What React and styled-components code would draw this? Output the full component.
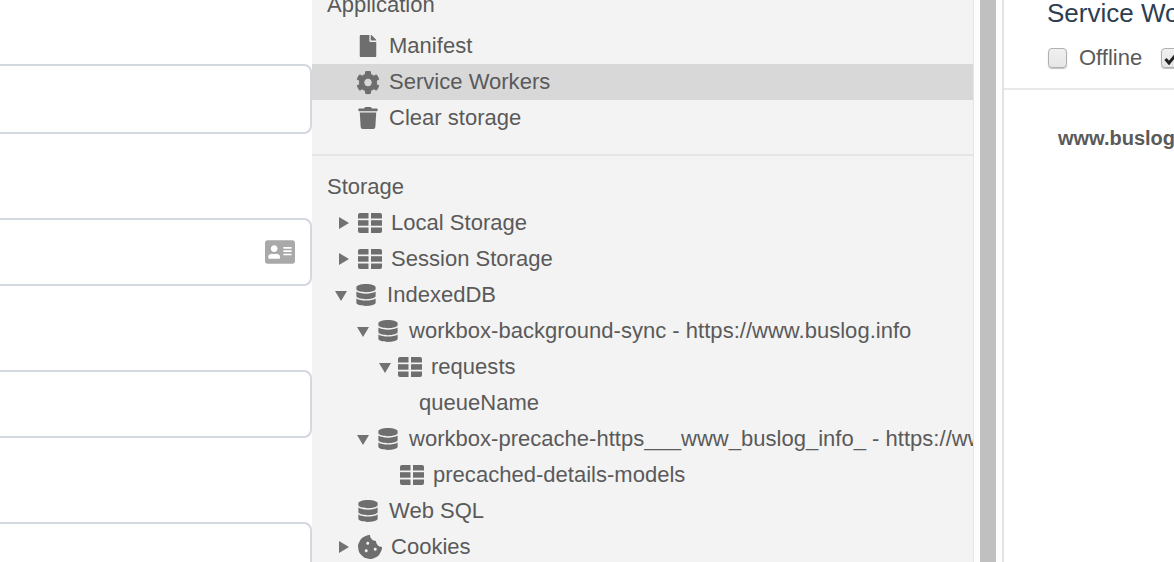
import React from "react";
import styled, { createGlobalStyle } from "styled-components";
import { FaCog, FaDatabase, FaCookieBite, FaAddressCard, FaFile, FaTrash } from "react-icons/fa";

const Global = createGlobalStyle`
  html, body { margin: 0; padding: 0; height: 100%; background: #fff; overflow: hidden; }
  #root { height: 100%; }
`;

const Page = styled.div`
  display: flex;
  width: 1174px;
  height: 562px;
  overflow: hidden;
  font-family: "Liberation Sans", Arial, sans-serif;
`;

const FormPane = styled.div`
  width: 312px;
  flex: none;
  padding-top: 64px;
  display: flex;
  flex-direction: column;
  gap: 84px;
  background: #fff;
  overflow: hidden;
`;

const Field = styled.div`
  box-sizing: border-box;
  height: ${p => p.$h}px;
  margin-left: -20px;
  border: 2px solid #d3d8de;
  border-radius: 8px;
  flex: none;
  display: flex;
  align-items: center;
  justify-content: flex-end;
  padding-right: 15px;
  color: #a9a9a9;
  font-size: 30px;
`;

const Sidebar = styled.div`
  box-sizing: border-box;
  width: 662px;
  flex: none;
  height: 562px;
  overflow: hidden;
  background: #f3f3f3;
  border-right: 1px solid #e4e4e4;
  color: #5a5a5a;
  font-size: 22px;
`;

const Heading = styled.div`
  height: ${p => p.$h}px;
  line-height: ${p => p.$lh}px;
  margin-top: ${p => p.$mt || 0}px;
  padding-left: 15px;
  white-space: nowrap;
`;

const Divider = styled.div`
  height: 2px;
  margin-top: 18px;
  background: #e5e5e5;
`;

const Row = styled.div`
  display: flex;
  align-items: center;
  height: 36px;
  padding-left: ${p => p.$indent}px;
  background: ${p => (p.$selected ? "#d8d8d8" : "transparent")};
  white-space: nowrap;
`;

const Arrow = styled.span`
  flex: none;
  width: 0;
  height: 0;
  margin-right: ${p => p.$open ? 7 : 9}px;
  ${p => p.$open
    ? `border-left: 6.5px solid transparent; border-right: 6.5px solid transparent; border-top: 10px solid #727272; margin-left: -1px; margin-top: 1px;`
    : `border-top: 6.5px solid transparent; border-bottom: 6.5px solid transparent; border-left: 10px solid #727272; margin-left: 1px;`}
`;

const IconSlot = styled.span`
  flex: none;
  width: 24px;
  height: 24px;
  margin-right: 9px;
  color: #6e6e6e;
  display: flex;
  align-items: center;
  justify-content: center;
`;

const Label = styled.span`
  line-height: 36px;
  letter-spacing: 0.02px;
  transform: translateY(${p => p.$dy || 0}px);
`;

const ScrollGutter = styled.div`
  width: 28px;
  flex: none;
  background: #fdfdfd;
  display: flex;
  justify-content: center;
  padding: 0 6px;
  box-sizing: border-box;
`;

const ScrollThumb = styled.div`
  width: 16px;
  background: #c0c0c0;
`;

const Detail = styled.div`
  flex: 1;
  min-width: 0;
  border-left: 2px solid #e3e3e3;
  background: #fff;
  overflow: hidden;
`;

const Toolbar = styled.div`
  box-sizing: border-box;
  height: 92px;
  border-bottom: 2px solid #e8e8e8;
  padding-left: 43px;
  white-space: nowrap;
`;

const Title = styled.div`
  font-size: 26px;
  line-height: 30px;
  margin-top: -2px;
  color: #2c3e50;
`;

const Checks = styled.div`
  display: flex;
  align-items: center;
  margin-top: 18px;
  height: 24px;
  color: #5a5a5a;
  font-size: 22px;
`;

const Box = styled.span`
  box-sizing: border-box;
  flex: none;
  width: 19px;
  height: 20px;
  margin-left: 1px;
  margin-right: 12px;
  border: 1px solid #b0b0b0;
  border-radius: 4px;
  background: linear-gradient(#f0f0f0, #e6e6e6);
  box-shadow: 0 1px 1px rgba(0, 0, 0, 0.25);
  display: flex;
  align-items: center;
  justify-content: center;
`;

const CheckLabel = styled.span`
  margin-right: 18px;
`;

const Origin = styled.div`
  margin-top: 36px;
  padding-left: 54px;
  font-size: 20px;
  line-height: 24px;
  font-weight: 700;
  color: #5a5a5a;
  white-space: nowrap;
`;

const Grid = () => (
  <svg width="24" height="20" viewBox="0 0 24 20" fill="currentColor">
    <path d="M2 0h8.5v5.5H0V2a2 2 0 0 1 2-2z" />
    <path d="M13 0h9a2 2 0 0 1 2 2v3.5H13z" />
    <rect x="0" y="7.2" width="10.5" height="5.5" />
    <rect x="13" y="7.2" width="11" height="5.5" />
    <path d="M0 14.5h10.5V20H2a2 2 0 0 1-2-2z" />
    <path d="M13 14.5h11V18a2 2 0 0 1-2 2h-9z" />
  </svg>
);

const Check = () => (
  <svg width="14" height="13" viewBox="0 0 14 13">
    <path d="M1.5 7l3.5 4L12.5 2" fill="none" stroke="#222" strokeWidth="3" />
  </svg>
);

const TreeRow = ({ indent, arrow, icon, children }) => (
  <Row $indent={arrow ? indent : indent + 18}>
    {arrow === "open" && <Arrow $open />}
    {arrow === "closed" && <Arrow />}
    {icon && <IconSlot>{icon}</IconSlot>}
    <Label>{children}</Label>
  </Row>
);

export default function App() {
  return (
    <Page>
      <Global />
      <FormPane>
        <Field $h={70} />
        <Field $h={68}><FaAddressCard /></Field>
        <Field $h={68} />
        <Field $h={68} />
      </FormPane>
      <Sidebar>
        <Heading $h={28} $lh={10}>Application</Heading>
        <TreeRow indent={26} icon={<FaFile size={22} />}>Manifest</TreeRow>
        <Row $indent={44} $selected>
          <IconSlot><FaCog size={25} /></IconSlot>
          <Label>Service Workers</Label>
        </Row>
        <TreeRow indent={26} icon={<FaTrash size={22} />}>Clear storage</TreeRow>
        <Divider />
        <Heading $h={36} $lh={36} $mt={13}>Storage</Heading>
        <TreeRow indent={26} arrow="closed" icon={<Grid />}>Local Storage</TreeRow>
        <TreeRow indent={26} arrow="closed" icon={<Grid />}>Session Storage</TreeRow>
        <TreeRow indent={24} arrow="open" icon={<FaDatabase size={22} />}>IndexedDB</TreeRow>
        <TreeRow indent={46} arrow="open" icon={<FaDatabase size={22} />}>workbox-background-sync - https://www.buslog.info</TreeRow>
        <TreeRow indent={68} arrow="open" icon={<Grid />}>requests</TreeRow>
        <TreeRow indent={89}>queueName</TreeRow>
        <TreeRow indent={46} arrow="open" icon={<FaDatabase size={22} />}>workbox-precache-https___www_buslog_info_ - https://www.buslog.info</TreeRow>
        <TreeRow indent={70} icon={<Grid />}>precached-details-models</TreeRow>
        <TreeRow indent={26} icon={<FaDatabase size={22} />}>Web SQL</TreeRow>
        <TreeRow indent={26} arrow="closed" icon={<FaCookieBite size={24} />}>Cookies</TreeRow>
      </Sidebar>
      <ScrollGutter><ScrollThumb /></ScrollGutter>
      <Detail>
        <Toolbar>
          <Title>Service Workers</Title>
          <Checks>
            <Box />
            <CheckLabel>Offline</CheckLabel>
            <Box><Check /></Box>
            <span>Update on reload</span>
          </Checks>
        </Toolbar>
        <Origin>www.buslog.info</Origin>
      </Detail>
    </Page>
  );
}
